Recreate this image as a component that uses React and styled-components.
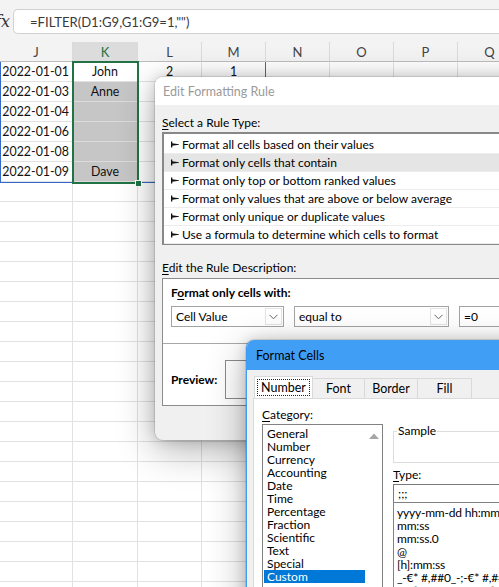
import React from 'react';
import styled, { createGlobalStyle } from 'styled-components';

const GlobalStyle = createGlobalStyle`
  html, body { margin: 0; padding: 0; background: #fff; overflow: hidden; }
  body { font-family: Lato, "Noto Sans", sans-serif; }
  * { box-sizing: border-box; }
`;

const UI = `Lato, "Noto Sans", sans-serif`;

const Page = styled.div`
  position: relative;
  width: 499px;
  height: 587px;
  overflow: hidden;
  background: #fff;
`;

/* ---------- formula bar ---------- */
const FormulaArea = styled.div`
  height: 42px;
  padding: 9px 0 8px;
  background: #f3f3f3;
  display: flex;
  align-items: stretch;
`;
const Fx = styled.div`
  width: 13px;
  padding-right: 3px;
  display: flex;
  justify-content: flex-end;
  align-items: center;
  font: italic 16px "DejaVu Serif", "Liberation Serif", serif;
  color: #333;
  white-space: nowrap;
`;
const FormulaBox = styled.div`
  flex: 1;
  background: #fff;
  border: 1px solid #d1d1d1;
  border-right: none;
  border-radius: 5px 0 0 5px;
  padding-left: 16px;
  display: flex;
  align-items: center;
  font: 13.1px ${UI};
  color: #3a3a3a;
  white-space: nowrap;
`;

/* ---------- sheet ---------- */
const Sheet = styled.div`
  position: relative;
  display: grid;
  grid-template-columns: 73px 65px repeat(6, 64px);
  grid-auto-rows: 20px;
`;
const HeadCell = styled.div`
  height: 20px;
  background: ${p => (p.$active ? '#dcdcdc' : '#f3f3f3')};
  color: ${p => (p.$active ? '#217346' : '#444')};
  border-right: 1px solid #dadada;
  border-bottom: 1px solid #bdbdbd;
  display: flex;
  align-items: center;
  justify-content: center;
  font: 13px ${UI};
`;
const Cell = styled.div`
  height: 20px;
  background: ${p => (p.$sel ? '#c6c6c6' : '#fff')};
  border-right: 1px solid #e1e1e1;
  border-bottom: 1px solid ${p => (p.$sel ? '#dcdcdc' : '#e1e1e1')};
  display: flex;
  align-items: center;
  justify-content: ${p => (p.$align === 'right' ? 'flex-end' : 'center')};
  padding: 0 3px;
  font: 12.4px ${UI};
  color: #111;
  white-space: nowrap;
`;
const SpillBorder = styled.div`
  position: absolute;
  left: 0;
  top: 20px;
  width: 266px;
  height: 121px;
  border: 1px solid #3568c8;
  border-top: none;
  pointer-events: none;
`;
const Selection = styled.div`
  position: absolute;
  left: 72px;
  top: 19px;
  width: 67px;
  height: 123px;
  border: 2px solid #217346;
  pointer-events: none;
`;
const FillHandle = styled.div`
  position: absolute;
  right: -5px;
  bottom: -5px;
  width: 7px;
  height: 7px;
  background: #217346;
  border: 1px solid #fff;
`;

/* ---------- dialog shared ---------- */
const Dialog = styled.div`
  position: absolute;
  left: ${p => p.$x}px;
  top: ${p => p.$y}px;
  width: ${p => p.$w}px;
  height: ${p => p.$h}px;
  background: #f0f0f0;
  border-radius: 8px;
  overflow: hidden;
  box-shadow: 0 0 0 1px rgba(0,0,0,0.1), 0 10px 38px rgba(0,0,0,0.3), 0 0 14px rgba(0,0,0,0.16);
  font: 12px ${UI};
  color: #000;
`;
const TitleBar = styled.div`
  height: ${p => p.$h}px;
  background: ${p => p.$bg};
  color: ${p => p.$color};
  padding-left: ${p => p.$pad}px;
  display: flex;
  align-items: center;
  font: 12.5px ${UI};
`;
const Label = styled.div`
  line-height: 16px;
  font-weight: ${p => (p.$bold ? 700 : 400)};
  white-space: nowrap;
  u { text-decoration: underline; text-underline-offset: 2px; }
`;

/* ---------- edit formatting rule ---------- */
const RuleBody = styled.div`
  padding: 10px 0 0 7px;
`;
const RuleList = styled.div`
  margin-top: 1px;
  height: 113px;
  background: #fff;
  border: 2px solid #888;
  border-right: none;
  padding-top: 2px;
`;
const RuleItem = styled.div`
  height: 18px;
  display: flex;
  align-items: center;
  gap: 3px;
  padding-left: 7px;
  background: ${p => (p.$sel ? '#e5e5e5' : '#fff')};
  border-bottom: 1px solid #ececec;
  white-space: nowrap;
`;
const DescLabel = styled(Label)`
  margin-top: 15px;
`;
const DescPanel = styled.div`
  margin-top: 2px;
  height: 128px;
  background: #fff;
  border: 1px solid #8c8c8c;
  border-right: none;
`;
const DescTop = styled.div`
  padding: 6px 8px 16px;
`;
const SelectRow = styled.div`
  margin-top: 5px;
  display: flex;
  gap: 10px;
`;
const Select = styled.div`
  width: ${p => p.$w}px;
  flex-shrink: 0;
  height: 21px;
  border: 1px solid #a3a3a3;
  background: #fff;
  display: flex;
  align-items: center;
  justify-content: space-between;
  padding-left: 4px;
  white-space: nowrap;
`;
const ArrowBox = styled.div`
  width: 17px;
  height: 17px;
  margin-right: 1px;
  border: 1px solid #e4e4e4;
  display: flex;
  align-items: center;
  justify-content: center;
`;
const TextInput = styled.div`
  flex: 1;
  height: 21px;
  border: 1px solid #a3a3a3;
  border-right: none;
  background: #fff;
  display: flex;
  align-items: center;
  padding-left: 4px;
`;
const Separator = styled.div`
  border-top: 1px solid #a8a8a8;
`;
const PreviewRow = styled.div`
  padding: 16px 0 0 8px;
  display: flex;
  align-items: center;
`;
const PreviewLabel = styled(Label)`
  width: 54px;
  font-weight: 700;
`;
const PreviewBox = styled.div`
  width: 220px;
  height: 39px;
  border: 1px solid #8a8a8a;
  background: #fff;
`;

/* ---------- format cells ---------- */
const FCDialog = styled(Dialog)`
  border-radius: 8px 0 0 0;
  border-left: 1px solid #3f9bf4;
`;
const Tabs = styled.div`
  margin-top: 6px;
  padding-left: 7px;
  height: 22px;
  display: flex;
  align-items: flex-end;
`;
const Tab = styled.div`
  width: ${p => p.$w}px;
  flex-shrink: 0;
  height: ${p => (p.$active ? 22 : 20)}px;
  background: ${p => (p.$active ? '#fff' : '#f0f0f0')};
  border: 1px solid #d9d9d9;
  border-bottom: none;
  border-left: ${p => (p.$first ? '1px solid #d9d9d9' : 'none')};
  display: flex;
  align-items: center;
  justify-content: center;
  padding: 2px;
  font: 12.5px ${UI};
`;
const FocusRing = styled.div`
  width: 100%;
  height: 100%;
  border: 1px dotted #222;
  display: flex;
  align-items: center;
  justify-content: center;
`;
const TabPanel = styled.div`
  margin-left: 6px;
  height: 300px;
  background: #fff;
  border-top: 1px solid #dadada;
  border-left: 1px solid #dadada;
  padding: 8px 0 0 9px;
  display: flex;
  gap: 10px;
`;
const CatCol = styled.div`
  width: 121px;
  flex-shrink: 0;
  margin-left: -1px;
`;
const CatList = styled.div`
  margin-top: 1px;
  height: 200px;
  border: 1px solid #828282;
  background: #fff;
  display: flex;
`;
const CatItems = styled.div`
  flex: 1;
  padding-top: 2px;
`;
const CatItem = styled.div`
  height: 13px;
  line-height: 13px;
  padding-left: 3px;
  margin-left: 1px;
  background: ${p => (p.$sel ? '#0078d7' : 'transparent')};
  color: ${p => (p.$sel ? '#fff' : '#000')};
  white-space: nowrap;
`;
const ScrollBar = styled.div`
  width: 17px;
  flex-shrink: 0;
  display: flex;
  justify-content: center;
  padding-top: 8px;
`;
const RightCol = styled.div`
  flex: 1;
  min-width: 0;
  overflow: hidden;
  padding-top: 16px;
`;
const Group = styled.fieldset`
  margin: 0;
  padding: 0 4px;
  height: 40px;
  border: 1px solid #dcdcdc;
  border-right: none;
  legend {
    padding: 0 1px;
    margin-left: -1px;
    line-height: 16px;
  }
`;
const TypeLabel = styled(Label)`
  margin-top: 4px;
`;
const TypeInput = styled.div`
  margin-top: 1px;
  height: 19px;
  border: 1px solid #7a7a7a;
  border-right: none;
  background: #fff;
  padding-left: 4px;
  display: flex;
  align-items: center;
`;
const TypeList = styled.div`
  margin-top: -1px;
  height: 120px;
  border: 1px solid #828282;
  border-right: none;
  background: #fff;
  padding: 3px 0 0 3px;
`;
const TypeItem = styled.div`
  height: 13px;
  line-height: 13px;
  letter-spacing: -0.2px;
  white-space: nowrap;
`;

/* ---------- icons ---------- */
const RuleArrow = () => (
  <svg width="8" height="7" viewBox="0 0 8 7">
    <rect x="0" y="0.5" width="1.3" height="6" fill="#111" />
    <path d="M1 2.3 L8 3.2 L8 3.8 L1 4.7 Z" fill="#111" />
  </svg>
);
const Chevron = () => (
  <svg width="9" height="6" viewBox="0 0 9 6">
    <path d="M0.5 0.8 L4.5 4.8 L8.5 0.8" fill="none" stroke="#666" strokeWidth="1" />
  </svg>
);
const UpTriangle = () => (
  <svg width="10" height="6" viewBox="0 0 10 6">
    <path d="M0 6 L5 0.5 L10 6 Z" fill="#a6a6a6" />
  </svg>
);

const colNames = ['J', 'K', 'L', 'M', 'N', 'O', 'P', 'Q'];
const rowsData = [
  ['2022-01-01', 'John', '2', '1'],
  ['2022-01-03', 'Anne'],
  ['2022-01-04', ''],
  ['2022-01-06', ''],
  ['2022-01-08', ''],
  ['2022-01-09', 'Dave'],
];
const TOTAL_ROWS = 27;

const ruleTypes = [
  'Format all cells based on their values',
  'Format only cells that contain',
  'Format only top or bottom ranked values',
  'Format only values that are above or below average',
  'Format only unique or duplicate values',
  'Use a formula to determine which cells to format',
];
const categories = [
  'General', 'Number', 'Currency', 'Accounting', 'Date', 'Time',
  'Percentage', 'Fraction', 'Scientific', 'Text', 'Special', 'Custom',
];
const types = [
  'yyyy-mm-dd hh:mm',
  'mm:ss',
  'mm:ss.0',
  '@',
  '[h]:mm:ss',
  '_-€* #,##0_-;-€* #,##0_-;_-€* "-"_-;_-@_-',
  '_-€* #,##0.00_-;-€* #,##0.00_-',
];

export default function App() {
  const rows = [];
  for (let r = 0; r < TOTAL_ROWS; r++) {
    const d = rowsData[r] || [];
    for (let c = 0; c < 8; c++) {
      const sel = c === 1 && r >= 1 && r <= 5;
      rows.push(
        <Cell key={`${r}-${c}`} $sel={sel} $align={c === 0 ? 'right' : 'center'}>
          {d[c] || ''}
        </Cell>
      );
    }
  }

  return (
    <Page>
      <GlobalStyle />
      <FormulaArea>
        <Fx>fx</Fx>
        <FormulaBox>=FILTER(D1:G9,G1:G9=1,"")</FormulaBox>
      </FormulaArea>

      <Sheet>
        {colNames.map(n => (
          <HeadCell key={n} $active={n === 'K'}>{n}</HeadCell>
        ))}
        {rows}
        <SpillBorder />
        <Selection>
          <FillHandle />
        </Selection>
      </Sheet>

      <Dialog $x={155} $y={77} $w={400} $h={363}>
        <TitleBar $h={28} $bg="#fff" $color="#9a9a9a" $pad={8}>Edit Formatting Rule</TitleBar>
        <RuleBody>
          <Label><u>S</u>elect a Rule Type:</Label>
          <RuleList>
            {ruleTypes.map((t, i) => (
              <RuleItem key={t} $sel={i === 1}>
                <RuleArrow />
                <span>{t}</span>
              </RuleItem>
            ))}
          </RuleList>
          <DescLabel><u>E</u>dit the Rule Description:</DescLabel>
          <DescPanel>
            <DescTop>
              <Label $bold>F<u>o</u>rmat only cells with:</Label>
              <SelectRow>
                <Select $w={113}>
                  <span>Cell Value</span>
                  <ArrowBox><Chevron /></ArrowBox>
                </Select>
                <Select $w={155}>
                  <span>equal to</span>
                  <ArrowBox><Chevron /></ArrowBox>
                </Select>
                <TextInput>=0</TextInput>
              </SelectRow>
            </DescTop>
            <Separator />
            <PreviewRow>
              <PreviewLabel>Preview:</PreviewLabel>
              <PreviewBox />
            </PreviewRow>
          </DescPanel>
        </RuleBody>
      </Dialog>

      <FCDialog $x={246} $y={340} $w={300} $h={300}>
        <TitleBar $h={30} $bg="#419ef5" $color="#000" $pad={9}>Format Cells</TitleBar>
        <Tabs>
          <Tab $w={59} $active $first><FocusRing>Number</FocusRing></Tab>
          <Tab $w={52}>Font</Tab>
          <Tab $w={53}>Border</Tab>
          <Tab $w={54}>Fill</Tab>
        </Tabs>
        <TabPanel>
          <CatCol>
            <Label><u>C</u>ategory:</Label>
            <CatList>
              <CatItems>
                {categories.map(c => (
                  <CatItem key={c} $sel={c === 'Custom'}>{c}</CatItem>
                ))}
              </CatItems>
              <ScrollBar><UpTriangle /></ScrollBar>
            </CatList>
          </CatCol>
          <RightCol>
            <Group>
              <legend>Sample</legend>
            </Group>
            <TypeLabel><u>T</u>ype:</TypeLabel>
            <TypeInput>;;;</TypeInput>
            <TypeList>
              {types.map(t => (
                <TypeItem key={t}>{t}</TypeItem>
              ))}
            </TypeList>
          </RightCol>
        </TabPanel>
      </FCDialog>
    </Page>
  );
}
